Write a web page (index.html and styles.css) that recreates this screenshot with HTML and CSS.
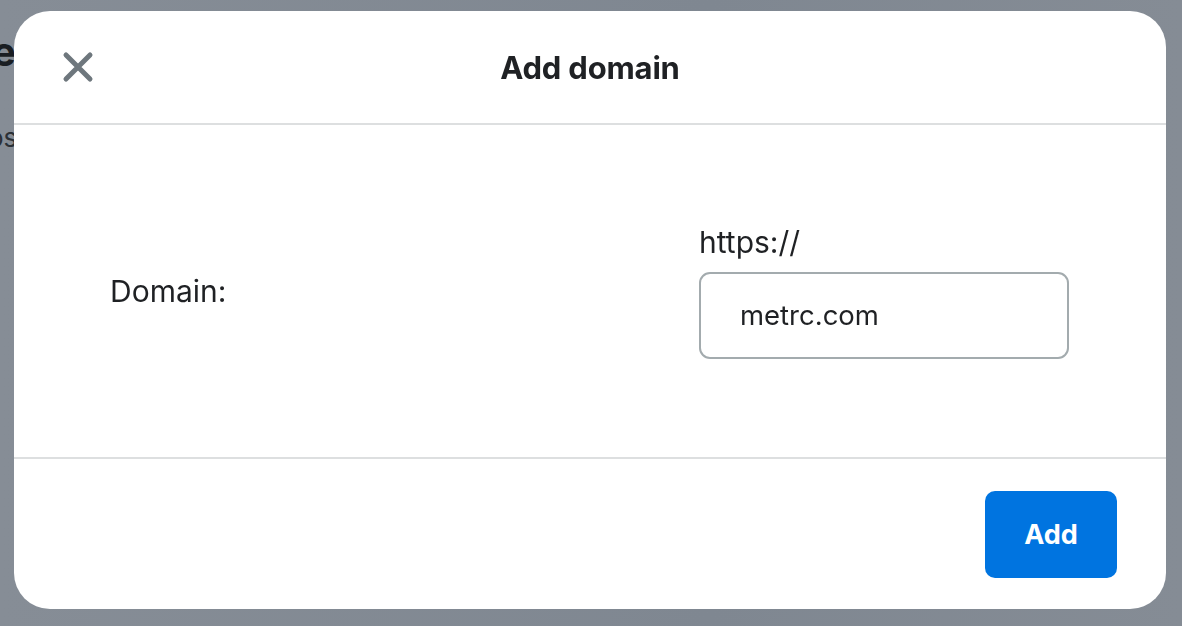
FILE: index.html
```html
<!DOCTYPE html>
<html lang="en">
<head>
<meta charset="utf-8">
<title>Add domain</title>
<link rel="stylesheet" href="styles.css">
</head>
<body>
<div class="page">
  <div class="page-title">e</div>
  <div class="page-sub">os</div>
</div>
<div class="overlay">
  <div class="modal" role="dialog" aria-labelledby="modal-title">
    <header class="modal-header">
      <button class="close-btn" aria-label="Close">
        <svg width="32" height="32" viewBox="0 0 32 32" aria-hidden="true">
          <path d="M4 4 L28 28 M28 4 L4 28" stroke="#6e777d" stroke-width="5" stroke-linecap="round" fill="none"/>
        </svg>
      </button>
      <h2 class="modal-title" id="modal-title">Add domain</h2>
    </header>
    <section class="modal-body">
      <label class="field-label" for="domain">Domain:</label>
      <div class="field">
        <div class="prefix">https://</div>
        <input class="text-input" id="domain" type="text" value="metrc.com">
      </div>
    </section>
    <footer class="modal-footer">
      <button class="primary-btn">Add</button>
    </footer>
  </div>
</div>
</body>
</html>
```
FILE: styles.css
```css
html, body {
  margin: 0;
  height: 100%;
}
body {
  background: linear-gradient(90deg, #868d96, #7f8791 60%, #858c95);
  font-family: "Inter", "Liberation Sans", sans-serif;
  color: #1f2124;
  overflow: hidden;
}
.page {
  padding-top: 28px;
}
.page-title {
  font-size: 40px;
  font-weight: 700;
  margin-left: -8px;
  line-height: 48px;
  color: #1a1e23;
}
.page-sub {
  margin-top: 46px;
  margin-left: -12px;
  font-size: 26px;
  color: #2b3036;
}
.overlay {
  position: fixed;
  inset: 0;
  display: flex;
  align-items: flex-start;
  padding: 11px 16px 17px 14px;
}
.modal {
  width: 1152px;
  height: 598px;
  background: #ffffff;
  border-radius: 36px;
  display: flex;
  flex-direction: column;
  overflow: hidden;
}
.modal-header {
  height: 112px;
  flex: none;
  position: relative;
  display: flex;
  align-items: center;
  justify-content: center;
  border-bottom: 2px solid #dddfe0;
}
.close-btn {
  position: absolute;
  left: 48px;
  top: 40px;
  width: 32px;
  height: 32px;
  padding: 0;
  border: 0;
  background: none;
  display: flex;
}
.modal-title {
  margin: 0;
  font-size: 31px;
  font-weight: 700;
  color: #1f2124;
  letter-spacing: -0.2px;
}
.modal-body {
  flex: none;
  height: 332px;
  border-bottom: 2px solid #dddfe0;
  display: flex;
  align-items: center;
  justify-content: space-between;
  padding: 0 97px 0 96px;
}
.field-label {
  font-size: 30px;
  color: #1f2124;
}
.field {
  width: 370px;
  display: flex;
  flex-direction: column;
  gap: 12px;
}
.prefix {
  font-size: 30px;
  line-height: 36px;
  color: #1f2124;
}
.text-input {
  box-sizing: border-box;
  width: 370px;
  height: 87px;
  border: 2px solid #a3abae;
  border-radius: 11px;
  padding: 0 0 0 39px;
  font: inherit;
  font-size: 27.5px;
  color: #1f2124;
  background: #fff;
  outline: none;
}
.modal-footer {
  flex: 1;
  display: flex;
  align-items: center;
  justify-content: flex-end;
  padding-right: 49px;
}
.primary-btn {
  width: 132px;
  height: 87px;
  border: 0;
  border-radius: 10px;
  background: #0074e0;
  color: #fff;
  font: inherit;
  font-size: 27px;
  font-weight: 700;
}
```
